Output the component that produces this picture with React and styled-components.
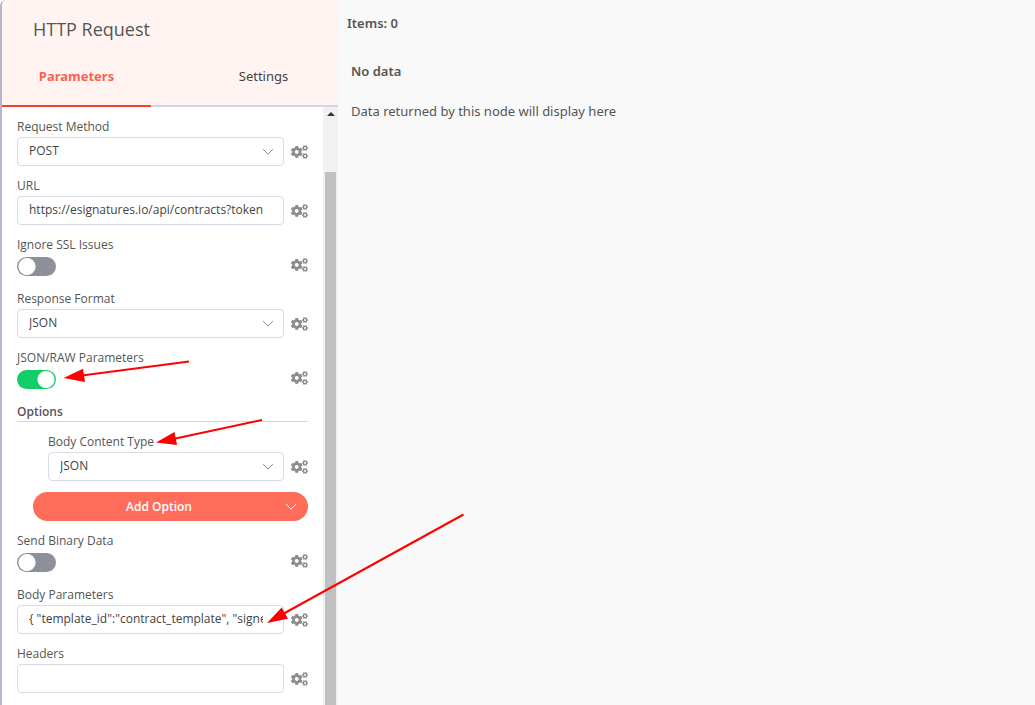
import React, { useState } from "react";
import styled, { createGlobalStyle } from "styled-components";
import { FaCogs } from "react-icons/fa";

const GlobalStyle = createGlobalStyle`
  * {
    box-sizing: border-box;
  }

  body {
    margin: 0;
    background-color: #f9f9f9;
    color: #555;
    font-family: "Noto Sans", "Open Sans", sans-serif;
    font-size: 13px;
  }

  input,
  select,
  button {
    font-family: inherit;
    font-size: inherit;
    color: inherit;
  }
`;

const Chevron = () => (
  <svg width="12" height="12" viewBox="0 0 12 12" fill="none" aria-hidden="true">
    <path d="M1.2 3.2 L6 8.2 L10.8 3.2" stroke="currentColor" />
  </svg>
);

const Settings = () => (
  <GearButton type="button" aria-label="Parameter options">
    <FaCogs />
  </GearButton>
);

const SelectField = ({ id, label, options }) => (
  <Field>
    <Label htmlFor={id}>{label}</Label>
    <Row>
      <SelectWrap>
        <Select id={id} defaultValue={options[0]}>
          {options.map((option) => (
            <option key={option}>{option}</option>
          ))}
        </Select>
        <Chevron />
      </SelectWrap>
      <Settings />
    </Row>
  </Field>
);

const TextField = ({ id, label, value }) => (
  <Field>
    <Label htmlFor={id}>{label}</Label>
    <Row>
      <TextInput id={id} type="text" defaultValue={value} />
      <Settings />
    </Row>
  </Field>
);

const SwitchField = ({ id, label, on = false }) => {
  const [checked, setChecked] = useState(on);
  return (
    <Field>
      <Label htmlFor={id}>{label}</Label>
      <SwitchRow>
        <Switch
          id={id}
          type="checkbox"
          checked={checked}
          onChange={(e) => setChecked(e.target.checked)}
        />
        <Settings />
      </SwitchRow>
    </Field>
  );
};

const App = () => {
  const [tab, setTab] = useState("Parameters");
  return (
    <>
      <GlobalStyle />
      <Page>
        <Panel>
          <Header>
            <Title>HTTP Request</Title>
            <Tabs>
              {["Parameters", "Settings"].map((name) => (
                <Tab
                  key={name}
                  type="button"
                  $active={tab === name}
                  onClick={() => setTab(name)}
                >
                  {name}
                </Tab>
              ))}
            </Tabs>
          </Header>
          <Body>
            <Form>
              <SelectField id="method" label="Request Method" options={["POST"]} />
              <TextField
                id="url"
                label="URL"
                value="https://esignatures.io/api/contracts?token"
              />
              <SwitchField id="ssl" label="Ignore SSL Issues" />
              <SelectField id="format" label="Response Format" options={["JSON"]} />
              <SwitchField id="raw" label="JSON/RAW Parameters" on />
              <SectionTitle>Options</SectionTitle>
              <Nested>
                <SelectField
                  id="contentType"
                  label="Body Content Type"
                  options={["JSON"]}
                />
              </Nested>
              <AddButton type="button">
                <span>Add Option</span>
                <Chevron />
              </AddButton>
              <SwitchField id="binary" label="Send Binary Data" />
              <TextField
                id="bodyParams"
                label="Body Parameters"
                value={'{ "template_id":"contract_template", "signers"'}
              />
              <TextField id="headers" label="Headers" value="" />
            </Form>
            <Scrollbar>
              <ScrollArrow viewBox="0 0 8 4" aria-hidden="true">
                <path d="M0 4 L4 0 L8 4 Z" />
              </ScrollArrow>
              <Thumb />
            </Scrollbar>
          </Body>
        </Panel>
        <Output>
          <Items>Items: 0</Items>
          <NoData>
            <h2>No data</h2>
            <p>Data returned by this node will display here</p>
          </NoData>
        </Output>
        <Arrows width="480" height="640" viewBox="0 0 480 640" aria-hidden="true">
          <path d="M189 361.5 L80 375.8 M262 420 L172 439.3 M463.5 514.5 L282 614.5" />
          <polygon points="63.5,378 83,368.7 85,382" />
          <polygon points="156,442.5 174.5,432 177,445" />
          <polygon points="267,623 281.7,607.5 288,618.7" />
        </Arrows>
      </Page>
    </>
  );
};

const Page = styled.main`
  position: relative;
  display: grid;
  grid-template-columns: minmax(338px, 32%) 1fr;
  min-height: 100vh;
`;

const Panel = styled.section`
  display: flex;
  flex-direction: column;
  background-color: #fff;
  border-left: 2px solid #b9b5cd;
  border-top-left-radius: 6px;
  overflow: hidden;
`;

const Header = styled.header`
  background-color: #fff4f1;
`;

const Title = styled.h1`
  margin: 0;
  padding: 17px 31px 23px;
  font-family: "Open Sans", sans-serif;
  font-size: 18px;
  line-height: 24px;
  font-weight: 400;
`;

const Tabs = styled.nav`
  display: flex;
  justify-content: space-between;
  box-shadow: inset 0 -2px #d3d6e6;
`;

const Tab = styled.button`
  width: 149px;
  height: 43px;
  padding: 0 0 16px;
  border: 0;
  border-bottom: 2px solid ${(props) => (props.$active ? "#f7412c" : "transparent")};
  background: none;
  line-height: 25px;
  font-weight: ${(props) => (props.$active ? 700 : 400)};
  color: ${(props) => (props.$active ? "#ff6150" : "#444")};
  cursor: pointer;
`;

const Body = styled.div`
  display: flex;
  flex: 1;
`;

const Form = styled.form`
  display: flex;
  flex-direction: column;
  flex: 1;
  gap: 11px;
  padding: 11px 15px 10px;
  font-family: "Open Sans", sans-serif;
  font-size: 12px;
`;

const Field = styled.div`
  display: flex;
  flex-direction: column;
`;

const Label = styled.label`
  align-self: flex-start;
  height: 19px;
  line-height: 17px;
`;

const Row = styled.div`
  display: flex;
  align-items: center;
  gap: 7px;
`;

const SwitchRow = styled(Row)`
  height: 24px;
  align-items: flex-start;
  justify-content: space-between;
`;

const GearButton = styled.button`
  display: flex;
  align-items: center;
  justify-content: center;
  width: 17px;
  height: 19px;
  padding: 0;
  border: 0;
  background: none;
  color: #8c8c8c;
  cursor: pointer;

  svg {
    width: 17px;
    height: 14px;
    flex: none;
  }
`;

const SelectWrap = styled.div`
  display: grid;
  flex: 1;
  align-items: center;

  > * {
    grid-area: 1 / 1;
  }

  svg {
    justify-self: end;
    margin-right: 10px;
    color: #888;
    pointer-events: none;
  }
`;

const TextInput = styled.input`
  flex: 1;
  min-width: 0;
  height: 29px;
  padding: 0 20px 2px 11px;
  border: 1px solid #d8dae6;
  border-radius: 4px;
  background-color: #fff;
  color: #444;
`;

const Select = styled(TextInput).attrs({ as: "select" })`
  appearance: none;
`;

const Switch = styled.input`
  appearance: none;
  width: 39px;
  height: 19px;
  margin: 2px 0 0;
  border-radius: 10px;
  background: radial-gradient(circle at 10px 50%, #fff 8px, transparent 9px) #8d9098;
  cursor: pointer;

  &:checked {
    background: radial-gradient(circle at 29px 50%, #fff 8px, transparent 9px) #13ce66;
  }
`;

const SectionTitle = styled.h2`
  margin: 0;
  border-bottom: 1px solid #cfd5e4;
  font-size: 12px;
  line-height: 18px;
  font-weight: 600;
`;

const Nested = styled.div`
  padding-left: 31px;
`;

const AddButton = styled.button`
  display: flex;
  align-items: center;
  height: 29px;
  margin-left: 16px;
  padding: 0 11px 0 0;
  border: 0;
  border-radius: 15px;
  background-color: #ff6d5a;
  color: #fff;
  font-weight: 600;
  cursor: pointer;

  span {
    flex: 1;
  }
`;

const Scrollbar = styled.div`
  display: flex;
  flex-direction: column;
  align-items: center;
  width: 15px;
  background-color: #f1f1f1;
`;

const ScrollArrow = styled.svg`
  width: 8px;
  height: 4px;
  margin: 5px 0 56px;
  fill: #333;
`;

const Thumb = styled.div`
  flex: 1;
  width: 11px;
  background-color: #c1c1c1;
`;

const Output = styled.section`
  padding: 13px 9px;
  line-height: 20px;
`;

const Items = styled.div`
  font-weight: 600;
`;

const NoData = styled.div`
  padding: 28px 4px;

  h2 {
    margin: 0 0 20px;
    font-size: 13px;
    font-weight: 600;
  }

  p {
    margin: 0;
  }
`;

const Arrows = styled.svg`
  position: absolute;
  top: 0;
  left: 0;
  pointer-events: none;
  fill: #f00;

  path {
    fill: none;
    stroke: #f00;
    stroke-width: 2;
  }
`;

export default App;
